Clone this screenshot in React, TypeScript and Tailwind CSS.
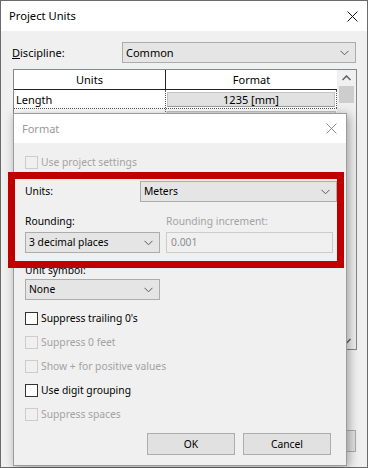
import React from "react";

function Chevron() {
  return (
    <svg width="9" height="6" viewBox="0 0 9 6" className="shrink-0">
      <polyline points="0.5,0.8 4.5,4.8 8.5,0.8" fill="none" stroke="#5a5a5a" strokeWidth="1" />
    </svg>
  );
}

function Combo({ text, className }: { text: string; className: string }) {
  return (
    <div className={`flex items-center justify-between bg-[#e5e5e5] border border-[#acacac] pl-[3px] pr-[6px] ${className}`}>
      <span>{text}</span>
      <Chevron />
    </div>
  );
}

function Check({ label, enabled }: { label: string; enabled: boolean }) {
  return (
    <div className="flex items-center h-[24px]">
      <div
        className={`w-[13px] h-[13px] border ${enabled ? "border-[#333333] bg-white" : "border-[#cccccc] bg-[#f0f0f0]"}`}
      />
      <span className={`ml-[3px] ${enabled ? "text-black" : "text-[#a3a3a3]"}`}>{label}</span>
    </div>
  );
}

function CloseX({ color, size }: { color: string; size: number }) {
  return (
    <svg width={size} height={size} viewBox="0 0 10 10">
      <line x1="0.5" y1="0.5" x2="9.5" y2="9.5" stroke={color} strokeWidth="0.9" />
      <line x1="9.5" y1="0.5" x2="0.5" y2="9.5" stroke={color} strokeWidth="0.9" />
    </svg>
  );
}

export default function App() {
  return (
    <div className="relative w-[368px] h-[468px] overflow-hidden bg-[#f0f0f0] font-['Noto_Sans',sans-serif] text-[11px] text-black leading-none">
      {/* Outer window: Project Units */}
      <div className="flex flex-col w-full h-full border border-[#6b6b6b]">
        <div className="flex items-center justify-between h-[30px] bg-white pl-[8px] pr-[9px]">
          <span className="text-[11.2px]">Project Units</span>
          <CloseX color="#111111" size={11} />
        </div>
        <div className="flex flex-col flex-1 px-[11px] pb-[15px]">
          <div className="flex items-center h-[21px] mt-[11px]">
            <span>
              <span className="underline">D</span>iscipline:
            </span>
            <Combo text="Common" className="ml-auto w-[234px] h-[21px]" />
          </div>
          {/* table */}
          <div className="flex ml-[1px] w-[344px] h-[281px] mt-[6px] border border-[#828790] bg-white">
            <div className="flex flex-col w-[323px]">
              <div className="flex h-[20px] border-b border-[#222222]">
                <div className="w-[152px] flex items-center justify-center border-r border-[#222222]">Units</div>
                <div className="flex-1 flex items-center justify-center">Format</div>
              </div>
              <div className="flex h-[19px] border-b border-dotted border-[#555555]">
                <div className="w-[152px] flex items-center pl-[2px] border-r border-dotted border-[#555555]">Length</div>
                <div className="flex-1 flex items-center px-[1px] border-r border-dotted border-[#555555]">
                  <div className="w-full h-[15px] flex items-center justify-center bg-[#e1e1e1] border border-[#c4c4c4] border-b-[#9a9a9a]">
                    1235 [mm]
                  </div>
                </div>
              </div>
              <div className="flex h-[19px]">
                <div className="w-[152px] flex items-center pl-[3px] border-r border-dotted border-[#555555]">Area</div>
                <div className="flex-1 flex items-center px-[1px]">
                  <div className="w-full h-[15px] flex items-center justify-center bg-[#e1e1e1] border border-[#c4c4c4]">
                    1235 [m²]
                  </div>
                </div>
              </div>
            </div>
            <div className="flex flex-col w-[19px] bg-[#f0f0f0]">
              <div className="h-[16px] flex items-center justify-center">
                <svg width="9" height="6" viewBox="0 0 9 6">
                  <polyline points="0.5,5 4.5,1 8.5,5" fill="none" stroke="#606060" strokeWidth="1.5" />
                </svg>
              </div>
              <div className="mx-[2px] h-[17px] bg-[#cdcdcd]" />
              <div className="mt-auto h-[16px] flex items-center justify-center">
                <svg width="9" height="6" viewBox="0 0 9 6">
                  <polyline points="0.5,1 4.5,5 8.5,1" fill="none" stroke="#606060" strokeWidth="1.5" />
                </svg>
              </div>
            </div>
          </div>
          <div className="mt-auto flex justify-end gap-[8px]">
            <div className="w-[75px] h-[22px] bg-[#e1e1e1] border border-[#adadad] flex items-center justify-center">OK</div>
            <div className="w-[75px] h-[22px] bg-[#e1e1e1] border border-[#adadad] flex items-center justify-center">Cancel</div>
            <div className="w-[75px] h-[22px] bg-[#e1e1e1] border border-[#adadad] flex items-center justify-center">Help</div>
          </div>
        </div>
      </div>

      {/* Format dialog */}
      <div className="absolute left-[13px] top-[113px] w-[334px] h-[353px] flex flex-col border border-[#9b9b9b] bg-[#f0f0f0] shadow-[2px_2px_10px_rgba(0,0,0,0.35)]">
        <div className="flex items-center justify-between h-[29px] bg-white pl-[8px] pr-[9px]">
          <span className="text-[#999999]">Format</span>
          <CloseX color="#8a8a8a" size={11} />
        </div>
        <div className="flex flex-col flex-1 pl-[11px] pr-[9px] pt-[12px] text-[10.3px]">
          <div className="flex items-center h-[14px]">
            <div className="w-[13px] h-[13px] border border-[#cccccc]" />
            <span className="ml-[3px] text-[#a3a3a3]">Use project settings</span>
          </div>
          <div className="flex items-center h-[21px] mt-[12px]">
            <span className="w-[115px]">Units:</span>
            <Combo text="Meters" className="w-[197px] h-[21px]" />
          </div>
          <div className="flex items-center h-[14px] mt-[12px]">
            <span className="w-[141px]">Rounding:</span>
            <span className="text-[#a3a3a3]">Rounding increment:</span>
          </div>
          <div className="flex items-center h-[21px] mt-[4px]">
            <Combo text="3 decimal places" className="w-[135px] h-[21px]" />
            <div className="ml-[6px] w-[167px] h-[21px] flex items-center pl-[4px] border border-[#cccccc] bg-[#f0f0f0] text-[#8d8d8d]">
              0.001
            </div>
          </div>
          <div className="flex items-center h-[14px] mt-[10px]">
            <span>Unit symbol:</span>
          </div>
          <Combo text="None" className="w-[135px] h-[21px] mt-[2px]" />
          <div className="flex flex-col mt-[6px]">
            <Check label="Suppress trailing 0's" enabled={true} />
            <Check label="Suppress 0 feet" enabled={false} />
            <Check label="Show + for positive values" enabled={false} />
            <Check label="Use digit grouping" enabled={true} />
            <Check label="Suppress spaces" enabled={false} />
          </div>
          <div className="flex justify-end gap-[8px] mt-[7px] pr-[6px]">
            <div className="w-[88px] h-[22px] bg-[#e1e1e1] border border-[#adadad] flex items-center justify-center">OK</div>
            <div className="w-[88px] h-[22px] bg-[#e1e1e1] border border-[#adadad] flex items-center justify-center">Cancel</div>
          </div>
        </div>
      </div>

      {/* Red highlight annotation */}
      <div className="absolute left-[8px] top-[172px] w-[336px] h-[96px] border-[7px] border-[#c00000]" />
    </div>
  );
}
